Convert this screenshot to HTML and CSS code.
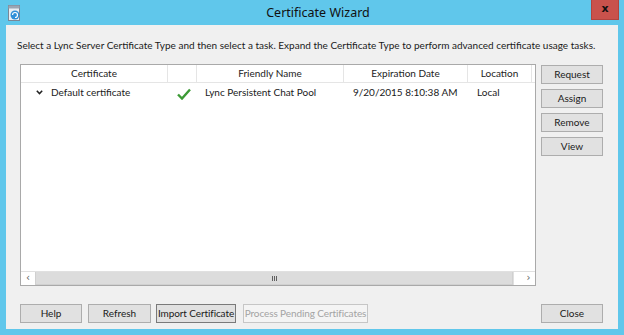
FILE: index.html
```html
<!DOCTYPE html>
<html>
<head>
<meta charset="utf-8">
<link rel="stylesheet" href="styles.css">
</head>
<body>
<div class="window">
  <div class="titlebar">
    <svg class="app-icon" width="14" height="18" viewBox="0 0 14 18">
      <rect x="1.5" y="1.5" width="11" height="15" fill="#e8eef4" stroke="#7a8796"/>
      <rect x="1.5" y="1.5" width="11" height="3" fill="#9aa6b4"/>
      <circle cx="8" cy="11" r="4.5" fill="#2f8fd8"/>
      <path d="M5.5 11 a2.5 2.5 0 1 1 2.5 2.5" fill="none" stroke="#fff" stroke-width="1.2"/>
    </svg>
    <div class="title">Certificate Wizard</div>
    <div class="close-btn"><span>x</span></div>
  </div>
  <div class="client">
    <p class="intro">Select a Lync Server Certificate Type and then select a task. Expand the Certificate Type to perform advanced certificate usage tasks.</p>
    <div class="main">
      <div class="listview">
        <div class="lv-header">
          <div class="col c-cert">Certificate</div>
          <div class="col c-icon"></div>
          <div class="col c-name">Friendly Name</div>
          <div class="col c-exp">Expiration Date</div>
          <div class="col c-loc">Location</div>
        </div>
        <div class="lv-row">
          <div class="cell c-cert">
            <svg class="chev" width="7" height="5" viewBox="0 0 7 5"><path d="M0.8 0.8 L3.5 3.6 L6.2 0.8" fill="none" stroke="#222" stroke-width="1.5"/></svg>
            <span>Default certificate</span>
          </div>
          <div class="cell c-icon">
            <svg width="14" height="12" viewBox="0 0 14 12"><path d="M1 6.5 L5 10.5 L13 1.5" fill="none" stroke="#3c9a35" stroke-width="2.4"/></svg>
          </div>
          <div class="cell c-name">Lync Persistent Chat Pool</div>
          <div class="cell c-exp">9/20/2015 8:10:38 AM</div>
          <div class="cell c-loc">Local</div>
        </div>
        <div class="lv-fill"></div>
        <div class="hscroll">
          <div class="sb-arrow">&#8249;</div>
          <div class="sb-thumb"><span class="grip"></span></div>
          <div class="sb-arrow">&#8250;</div>
        </div>
      </div>
      <div class="side">
        <button class="btn">Request</button>
        <button class="btn">Assign</button>
        <button class="btn">Remove</button>
        <button class="btn">View</button>
      </div>
    </div>
    <div class="footer">
      <button class="btn w-help">Help</button>
      <button class="btn w-refresh">Refresh</button>
      <button class="btn w-import focused">Import Certificate</button>
      <button class="btn w-process" disabled>Process Pending Certificates</button>
      <div class="spacer"></div>
      <button class="btn">Close</button>
    </div>
  </div>
</div>
</body>
</html>
```

FILE: styles.css
```css
* { box-sizing: border-box; }
html, body { margin: 0; padding: 0; }
body {
  width: 624px;
  height: 335px;
  background: #60c7eb;
  font-family: "Lato", "Noto Sans", sans-serif;
  font-size: 10px;
  color: #1a1a1a;
  overflow: hidden;
}
.window {
  width: 624px;
  height: 335px;
  display: flex;
  flex-direction: column;
}
.titlebar {
  height: 25px;
  display: flex;
  align-items: flex-start;
}
.app-icon { margin: 4px 0 0 7px; }
.title {
  flex: 1;
  text-align: center;
  font-family: "Noto Sans", sans-serif;
  font-size: 12.5px;
  line-height: 25px;
  color: #111;
  padding-left: 24px;
}
.close-btn {
  width: 28px;
  height: 20px;
  margin-right: 5px;
  background: #c9524c;
  border: 1px solid #b0443f;
  border-top: none;
  display: flex;
  align-items: center;
  justify-content: center;
}
.close-btn span {
  font-family: "DejaVu Sans", sans-serif;
  font-weight: bold;
  font-size: 11px;
  color: #111;
  line-height: 1;
  margin-top: -2px;
}
.client {
  flex: 1;
  margin: 0 6px 6px 6px;
  background: #f0f0f0;
  display: flex;
  flex-direction: column;
  padding: 0 15px 6px 14px;
}
.intro {
  margin: 14px 0 0 -3px;
  height: 25px;
  line-height: 12px;
  white-space: nowrap;
}
.main {
  display: flex;
  gap: 5px;
  height: 222px;
}
.listview {
  width: 516px;
  height: 222px;
  border: 1px solid #a9a9a9;
  background: #fff;
  display: flex;
  flex-direction: column;
}
.lv-header {
  display: flex;
  height: 18px;
  border-bottom: 1px solid #e5e5e5;
}
.lv-header .col {
  border-right: 1px solid #e5e5e5;
  text-align: center;
  line-height: 17px;
  color: #222;
}
.c-cert { width: 147px; }
.c-icon { width: 29px; }
.c-name { width: 147px; }
.c-exp { width: 124px; }
.c-loc { width: 64px; }
.lv-row {
  display: flex;
  height: 18px;
  align-items: center;
}
.cell { white-space: nowrap; }
.lv-row .c-cert { display: flex; align-items: center; padding-left: 15px; }
.chev { margin-right: 8px; margin-top: 1px; }
.lv-row .c-icon { display: flex; justify-content: center; padding-top: 3px; padding-left: 2px; }
.lv-row .c-name { padding-left: 8px; }
.lv-row .c-exp { padding-left: 9px; }
.lv-row .c-loc { padding-left: 9px; }
.lv-fill { flex: 1; }
.hscroll {
  height: 14px;
  display: flex;
  border-top: 1px solid #e0e0e0;
}
.sb-arrow {
  width: 14px;
  background: #fff;
  color: #606060;
  text-align: center;
  font-family: "DejaVu Sans", sans-serif;
  font-size: 10px;
  line-height: 12px;
}
.sb-arrow:last-child { width: 22px; padding-left: 8px; border-left: 1px solid #e0e0e0; }
.sb-thumb {
  flex: 1;
  background: #dcdcdc;
  border: 1px solid #d0d0d0;
  border-top: none;
  display: flex;
  align-items: center;
  justify-content: center;
}
.grip {
  width: 5px;
  height: 5px;
  background: repeating-linear-gradient(90deg, #606060 0 1px, transparent 1px 2px);
}
.side {
  display: flex;
  flex-direction: column;
  gap: 5px;
  padding-top: 1px;
}
.btn {
  font-family: inherit;
  font-size: 10px;
  color: #1a1a1a;
  width: 62px;
  height: 19px;
  padding: 0;
  background: #e1e1e1;
  border: 1px solid #adadad;
  border-radius: 0;
  line-height: 17px;
  white-space: nowrap;
}
.footer {
  display: flex;
  gap: 5px;
  margin-top: 18px;
  height: 19px;
}
.w-refresh { width: 63px; margin-left: 1px; }
.w-import { width: 80px; letter-spacing: -0.1px; }
.focused { border-color: #7a7a7a; }
.w-process {
  width: 125px;
  margin-left: 2px;
  background: #f4f4f4;
  border-color: #c6c6c6;
  color: #a3a3a3;
  letter-spacing: -0.1px;
}
.spacer { flex: 1; }
```
